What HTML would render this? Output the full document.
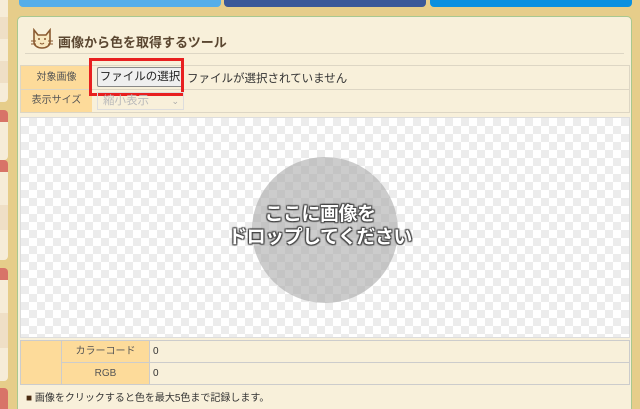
<!DOCTYPE html>
<html><head><meta charset="utf-8"><style>
*{margin:0;padding:0;box-sizing:border-box}
html,body{width:640px;height:409px;overflow:hidden}
body{background:#e6cd8a;font-family:"Liberation Sans","Noto Sans CJK JP",sans-serif;position:relative}
.a{position:absolute}
.card{position:absolute;left:-6px;width:14px;border-radius:4px;background:#f6ecd8;overflow:hidden}
.panel{left:17px;top:16px;width:615px;height:400px;background:#f8f0da;border:1px solid #a8c890;border-radius:5px}
.lab{background:#fddb9a;color:#555;font-size:10px;text-align:center}
.chk{background-color:#fff;background-image:linear-gradient(45deg,#ececec 25%,transparent 25%,transparent 75%,#ececec 75%),linear-gradient(45deg,#ececec 25%,transparent 25%,transparent 75%,#ececec 75%);background-size:16px 16px;background-position:0 0,8px 8px}
</style></head><body>
<div class="a" style="left:19px;top:-4px;width:202px;height:11px;background:#55aee9;border-radius:4px"></div>
<div class="a" style="left:224px;top:-4px;width:202px;height:11px;background:#3a5898;border-radius:4px"></div>
<div class="a" style="left:430px;top:-4px;width:202px;height:11px;background:#0a90e0;border-radius:4px"></div>
<div class="card" style="top:-5px;height:107px;background:repeating-linear-gradient(#f6ecd8 0 22px,#efdfc6 22px 44px)"></div>
<div class="card" style="top:110px;height:50px;background:linear-gradient(#d87468 0 12px,#f6ecd8 12px)"></div>
<div class="card" style="top:160px;height:100px;background:linear-gradient(#d87468 0 12px,#f6ecd8 12px 45px,#efdfc6 45px 70px,#f6ecd8 70px)"></div>
<div class="card" style="top:268px;height:113px;background:linear-gradient(#d87468 0 12px,#f6ecd8 12px 45px,#efdfc6 45px 80px,#f6ecd8 80px)"></div>
<div class="card" style="top:388px;height:30px;background:#d87468"></div>
<div class="a panel"></div>
<svg class="a" style="left:31px;top:28px" width="22" height="22" viewBox="0 0 22 22"><path d="M3 2l4 5h8l4-5v12c0 4-4 6-8 6s-8-2-8-6z" fill="#f8e8c0" stroke="#8a5a30" stroke-width="1.6"/><circle cx="8" cy="11" r="1" fill="#8a5a30"/><circle cx="14" cy="11" r="1" fill="#8a5a30"/><path d="M9 15q2 2 4 0M0 13h5M0 16h5M17 13h5M17 16h5" stroke="#8a5a30" fill="none" stroke-width="1"/></svg>
<div class="a" style="left:58px;top:32px;font-size:13px;font-weight:bold;color:#5a4630">画像から色を取得するツール</div>
<div class="a" style="left:25px;top:53px;width:599px;height:1px;background:#ddd6c4"></div>
<div class="a" style="left:20px;top:65px;width:610px;height:48px;border:1px solid #ddd6c4"></div>
<div class="a" style="left:20px;top:89px;width:610px;height:1px;background:#ddd6c4"></div>
<div class="a lab" style="left:21px;top:66px;width:71px;height:23px;line-height:23px">対象画像</div>
<div class="a lab" style="left:21px;top:90px;width:71px;height:22px;line-height:22px">表示サイズ</div>
<div class="a" style="left:97px;top:67px;width:86px;height:20px;border:1px solid #888;background:#efefef;border-radius:2px;font-size:11.5px;line-height:18px;text-align:center;color:#222;white-space:nowrap">ファイルの選択</div>
<div class="a" style="left:187px;top:70px;font-size:11.5px;color:#333;white-space:nowrap">ファイルが選択されていません</div>
<div class="a" style="left:89px;top:58px;width:95px;height:38px;border:3px solid #e82020"></div>
<div class="a" style="left:97px;top:92px;width:87px;height:18px;border:1px solid #ddd;font-size:11.5px;color:#bbb;line-height:16px;padding-left:5px">縮小表示<span style="position:absolute;right:4px;color:#aaa;font-size:9px">⌄</span></div>
<div class="a chk" style="left:20px;top:117px;width:610px;height:221px;border:1px solid #ddd"></div>
<div class="a" style="left:252px;top:157px;width:146px;height:146px;border-radius:50%;background:rgba(170,170,170,.6)"></div>
<div class="a" style="left:195px;top:203px;width:250px;text-align:center;font-size:19px;font-weight:bold;line-height:23px;color:#fff;letter-spacing:-0.5px;text-shadow:0 0 2px #444,1px 1px 1px #444,-1px -1px 1px #444,1px -1px 1px #444,-1px 1px 1px #444">ここに画像を<br>ドロップしてください</div>
<div class="a" style="left:20px;top:340px;width:610px;height:45px;border:1px solid #ccc"></div>
<div class="a lab" style="left:21px;top:341px;width:40px;height:43px"></div>
<div class="a lab" style="left:61px;top:341px;width:88px;height:21px;line-height:21px;border-left:1px solid #ccc">カラーコード</div>
<div class="a lab" style="left:61px;top:363px;width:88px;height:21px;line-height:21px;border-left:1px solid #ccc">RGB</div>
<div class="a" style="left:61px;top:362px;width:569px;height:1px;background:#ccc"></div>
<div class="a" style="left:149px;top:341px;width:1px;height:43px;background:#ccc"></div>
<div class="a" style="left:153px;top:346px;font-size:10px;color:#333">0</div>
<div class="a" style="left:153px;top:368px;font-size:10px;color:#333">0</div>
<div class="a" style="left:26px;top:389px;font-size:10px;color:#333"><span style="color:#4a2a10">■</span> 画像をクリックすると色を最大5色まで記録します。</div>
</body></html>
